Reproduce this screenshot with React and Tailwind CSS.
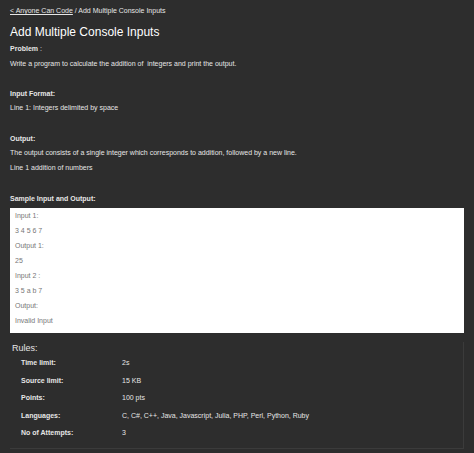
const sample = ["Input 1:", "3 4 5 6 7", "Output 1:", "25", "Input 2 :", "3 5 a b 7", "Output:", "Invalid Input"];

const rules = [
  ["Time limit:", "2s"],
  ["Source limit:", "15 KB"],
  ["Points:", "100 pts"],
  ["Languages:", "C, C#, C++, Java, Javascript, Julia, PHP, Perl, Python, Ruby"],
  ["No of Attempts:", "3"],
];

export default function App() {
  return (
    <div className="min-h-[453px] bg-[#2d2d2d] px-[10px] pt-[6px] text-[#e6e6e6] font-['Liberation_Sans',Arial,sans-serif]">
      <div className="text-[7px] leading-[10px]">
        <a href="#" className="underline">&lt; Anyone Can Code</a> / Add Multiple Console Inputs
      </div>
      <h1 className="mt-[9px] text-[12px] leading-[14px] text-white">Add Multiple Console Inputs</h1>
      <p className="mt-[5px] text-[7px] leading-[10px]"><b>Problem</b> :</p>
      <p className="mt-[5px] text-[7px] leading-[10px]">Write a program to calculate the addition of &nbsp;integers and print the output.</p>

      <p className="mt-[20px] text-[7px] font-bold leading-[10px]">Input Format:</p>
      <p className="mt-[4px] text-[7px] leading-[10px]">Line 1: Integers delimited by space</p>

      <p className="mt-[21px] text-[7px] font-bold leading-[10px]">Output:</p>
      <p className="mt-[4px] text-[7px] leading-[10px]">The output consists of a single integer which corresponds to addition, followed by a new line.</p>
      <p className="mt-[5px] text-[7px] leading-[10px]">Line 1 addition of numbers</p>

      <p className="mt-[21px] text-[7px] font-bold leading-[10px]">Sample Input and Output:</p>
      <div className="mt-[4px] flex flex-col gap-[5px] bg-white px-[5px] pt-[3px] pb-[7px] text-[7px] leading-[10px] text-[#777]">
        {sample.map((line, i) => (
          <div key={i}>{line}</div>
        ))}
      </div>

      <div className="border-r border-b border-[#3b3b3b] pb-[6px]">
        <h2 className="mt-[9px] pl-[2px] text-[9px] leading-[12px]">Rules:</h2>
        <div className="flex flex-col">
          {rules.map(([label, value]) => (
            <div key={label} className="flex text-[7px] leading-[17.5px]">
              <span className="ml-[11px] w-[101px] shrink-0 font-bold">{label}</span>
              <span>{value}</span>
            </div>
          ))}
        </div>
      </div>
    </div>
  );
}
